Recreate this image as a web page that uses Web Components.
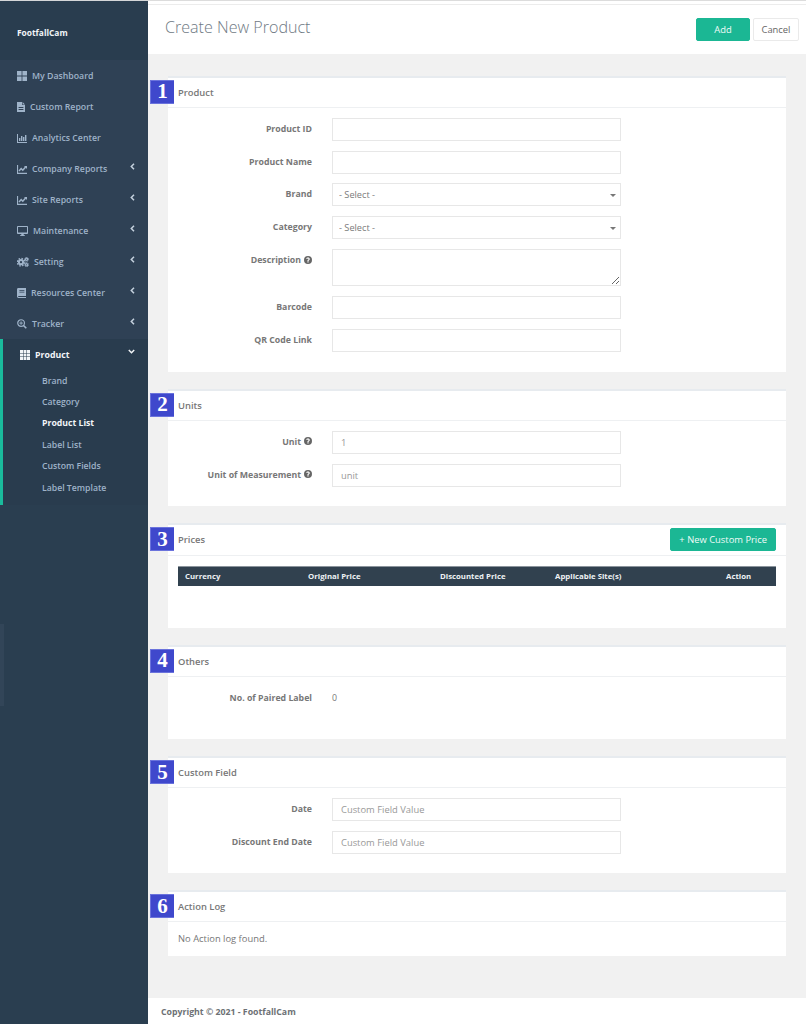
<!DOCTYPE html>
<html lang="en">
<head>
<meta charset="utf-8">
<title>Create New Product</title>
<style>
  html, body { margin: 0; background: #f1f1f1; }
  body { font-family: "Open Sans", "Liberation Sans", sans-serif; }
</style>
</head>
<body>
<fc-app>
  <fc-sidebar slot="side" brand="FootfallCam">
    <fc-nav-item icon="dashboard" w="10">My Dashboard</fc-nav-item>
    <fc-nav-item icon="file" w="8">Custom Report</fc-nav-item>
    <fc-nav-item icon="bars" w="10">Analytics Center</fc-nav-item>
    <fc-nav-item icon="line" w="10" more>Company Reports</fc-nav-item>
    <fc-nav-item icon="line" w="10" more>Site Reports</fc-nav-item>
    <fc-nav-item icon="desktop" w="11" more>Maintenance</fc-nav-item>
    <fc-nav-item icon="cogs" w="12" more>Setting</fc-nav-item>
    <fc-nav-item icon="book" w="9" more>Resources Center</fc-nav-item>
    <fc-nav-item icon="search" w="10" more>Tracker</fc-nav-item>
    <fc-nav-group label="Product">
      <fc-sub-item>Brand</fc-sub-item>
      <fc-sub-item>Category</fc-sub-item>
      <fc-sub-item current>Product List</fc-sub-item>
      <fc-sub-item>Label List</fc-sub-item>
      <fc-sub-item>Custom Fields</fc-sub-item>
      <fc-sub-item>Label Template</fc-sub-item>
    </fc-nav-group>
  </fc-sidebar>

  <fc-page-head heading="Create New Product"></fc-page-head>

  <fc-section num="1" heading="Product" pad-bottom="20">
    <fc-field label="Product ID"></fc-field>
    <fc-field label="Product Name"></fc-field>
    <fc-field label="Brand" kind="select" value="- Select -"></fc-field>
    <fc-field label="Category" kind="select" value="- Select -"></fc-field>
    <fc-field label="Description" kind="textarea" help></fc-field>
    <fc-field label="Barcode"></fc-field>
    <fc-field label="QR Code Link"></fc-field>
  </fc-section>

  <fc-section num="2" heading="Units" pad-bottom="19.5">
    <fc-field label="Unit" value="1" help></fc-field>
    <fc-field label="Unit of Measurement" value="unit" help></fc-field>
  </fc-section>

  <fc-section num="3" heading="Prices" pad-bottom="41.7">
    <fc-button slot="action" primary>+ New Custom Price</fc-button>
    <fc-price-table></fc-price-table>
  </fc-section>

  <fc-section num="4" heading="Others" pad-bottom="29">
    <fc-field label="No. of Paired Label" kind="static" value="0"></fc-field>
  </fc-section>

  <fc-section num="5" heading="Custom Field" pad-bottom="19">
    <fc-field label="Date" placeholder="Custom Field Value"></fc-field>
    <fc-field label="Discount End Date" placeholder="Custom Field Value"></fc-field>
  </fc-section>

  <fc-section num="6" heading="Action Log" pad-bottom="11">
    <fc-note>No Action log found.</fc-note>
  </fc-section>

  <fc-footer slot="foot">Copyright © 2021 - FootfallCam</fc-footer>
</fc-app>

<script>
  const ICONS = {
    dashboard: '<svg viewBox="0 0 10 10"><path d="M0 0h4.6v4.5H0zM5.4 0H10v4.5H5.4zM0 5.5h4.6V10H0zM5.4 5.5H10V10H5.4z"/></svg>',
    file: '<svg viewBox="0 0 8 10"><path fill-rule="evenodd" d="M0 0h5v3h3v7H0zM5.6 0 8 2.4H5.6zM1.6 5v.9h4.8V5zM1.6 7v.9h4.8V7z"/></svg>',
    bars: '<svg viewBox="0 0 10 10"><path d="M0 1h1v7.9h9V10H0zM2 5h1.4v3H2zM4 3h1.4v5H4zM6 4h1.4v4H6zM8 2h1.4v6H8z"/></svg>',
    line: '<svg viewBox="0 0 10 10"><path d="M0 1h1.1v7.8H10V10H0z"/><path d="M2 7 4.2 4.6 5.8 6.2 8.6 3" fill="none" stroke="currentColor" stroke-width="1.5"/><path d="M7 2H10V5z"/></svg>',
    desktop: '<svg viewBox="0 0 11 10"><path fill-rule="evenodd" d="M.8 0h9.4c.4 0 .8.4.8.8v6.4c0 .4-.4.8-.8.8H.8C.4 8 0 7.6 0 7.2V.8C0 .4.4 0 .8 0zM1 1v5.4h9V1zM4.4 8h2.2l.3 1.2H8V10H3v-.8h1.1z"/></svg>',
    cogs: '<svg viewBox="0 0 12 10"><circle cx="4" cy="5.2" r="2.1" fill="none" stroke="currentColor" stroke-width="2"/><circle cx="4" cy="5.2" r="3.7" fill="none" stroke="currentColor" stroke-width="1.4" stroke-dasharray="1.6 1.3"/><circle cx="9.6" cy="2.3" r="1.1" fill="none" stroke="currentColor" stroke-width="1.2"/><circle cx="9.6" cy="2.3" r="2" fill="none" stroke="currentColor" stroke-width=".9" stroke-dasharray="1 .6"/><circle cx="9.6" cy="7.7" r="1.1" fill="none" stroke="currentColor" stroke-width="1.2"/><circle cx="9.6" cy="7.7" r="2" fill="none" stroke="currentColor" stroke-width=".9" stroke-dasharray="1 .6"/></svg>',
    book: '<svg viewBox="0 0 9 10"><path fill-rule="evenodd" d="M1.4 0H9v8H1.6c-.7 0-.7 1 0 1H9v1H1.4C.6 10 0 9.4 0 8.6V1.4C0 .6.6 0 1.4 0zM2.4 2v.8h5V2zM2.4 3.8v.8h5v-.8z"/></svg>',
    search: '<svg viewBox="0 0 11 11"><circle cx="4.5" cy="4.5" r="3.7" fill="none" stroke="currentColor" stroke-width="1.3"/><path d="M7.2 7.2 10.2 10.2" stroke="currentColor" stroke-width="1.8"/><path d="M4.5 2.6v3.8M2.6 4.5h3.8" stroke="currentColor" stroke-width="1"/></svg>',
    grid: '<svg viewBox="0 0 10 10"><path d="M0 0h3v2.9H0zM3.5 0h3v2.9h-3zM7 0h3v2.9H7zM0 3.5h3v2.9H0zM3.5 3.5h3v2.9h-3zM7 3.5h3v2.9H7zM0 7h3v3H0zM3.5 7h3v3h-3zM7 7h3v3H7z"/></svg>',
    left: '<svg viewBox="0 0 5 7"><path d="M4 .8 1.3 3.5 4 6.2" fill="none" stroke="currentColor" stroke-width="1.5"/></svg>',
    down: '<svg viewBox="0 0 7 5"><path d="M.8 1 3.5 3.7 6.2 1" fill="none" stroke="currentColor" stroke-width="1.5"/></svg>',
    help: '<svg viewBox="0 0 8 8"><path fill-rule="evenodd" d="M4 0a4 4 0 1 1 0 8 4 4 0 0 1 0-8zM3.4 5.3v1.1h1.2V5.3zM4 1.5c-1 0-1.6.5-1.8 1.2l.9.4c.1-.4.4-.6.8-.6s.7.2.7.5c0 .3-.3.5-.6.7-.4.3-.6.5-.6 1v.2h1.2c0-.4.2-.5.5-.7.4-.3.7-.6.7-1.2 0-.9-.8-1.5-1.8-1.5z"/></svg>'
  };

  customElements.define('fc-app', class extends HTMLElement {
    constructor() {
      super();
      this.attachShadow({ mode: 'open' }).innerHTML = `
      <style>
        :host { display: grid; grid-template-columns: 148px 658px; width: 806px; height: 1024px; overflow: hidden; }
        main { display: flex; flex-direction: column; height: 1024px; background: #f1f1f1; }
        .content { flex: 1; display: flex; flex-direction: column; gap: 17px; padding: 0 20px; }
      </style>
      <slot name="side"></slot>
      <main>
        <div class="content"><slot></slot></div>
        <slot name="foot"></slot>
      </main>`;
    }
  });

  customElements.define('fc-sidebar', class extends HTMLElement {
    constructor() {
      super();
      this.attachShadow({ mode: 'open' }).innerHTML = `
      <style>
        :host { display: flex; flex-direction: column; position: relative; height: 1024px; background: #2a3e50; border-top: 1px solid #d4d6d8; box-sizing: border-box; }
        .brand { height: 59px; flex: none; display: flex; align-items: center; padding: 3px 0 0 17px; box-sizing: border-box;
          background: #293d4f; color: #f2f5f8; font: 700 8.4px "Open Sans", sans-serif; }
        nav { background: #2f4155; display: flex; flex-direction: column; }
        .ghost { position: absolute; left: 0; top: 623px; width: 4px; height: 82px; background: #324558; }
      </style>
      <div class="brand"></div>
      <nav><slot></slot></nav>
      <div class="ghost"></div>`;
      this.shadowRoot.querySelector('.brand').textContent = this.getAttribute('brand');
    }
  });

  customElements.define('fc-nav-item', class extends HTMLElement {
    constructor() {
      super();
      const w = this.getAttribute('w');
      this.attachShadow({ mode: 'open' }).innerHTML = `
      <style>
        :host { display: flex; align-items: center; height: 31px; padding-left: 17px; position: relative; color: #9fb3c9; font: 600 8.75px "Open Sans", sans-serif; }
        .ic { width: ${w}px; margin-right: 5px; flex: none; display: flex; fill: currentColor; }
        .ic svg { width: 100%; display: block; }
        .more { position: absolute; left: 130px; top: 10px; width: 5px; color: #c5d1de; fill: currentColor; }
        .more svg { display: block; width: 100%; }
      </style>
      <span class="ic">${ICONS[this.getAttribute('icon')]}</span>
      <slot></slot>
      ${this.hasAttribute('more') ? `<span class="more">${ICONS.left}</span>` : ''}`;
    }
  });

  customElements.define('fc-nav-group', class extends HTMLElement {
    constructor() {
      super();
      this.attachShadow({ mode: 'open' }).innerHTML = `
      <style>
        :host { display: block; background: #293c4e; border-left: 3px solid #1abb9c; height: 166px; box-sizing: border-box; }
        .head { display: flex; align-items: center; height: 31px; padding-left: 17px; position: relative; color: #f2f5f8; font: 700 8.75px "Open Sans", sans-serif; }
        .ic { width: 10px; margin-right: 5px; display: flex; fill: currentColor; }
        .ic svg { width: 100%; display: block; }
        .caret { position: absolute; left: 125px; top: 10px; width: 7px; color: #f2f5f8; }
        .caret svg { display: block; width: 100%; }
        .subs { display: flex; flex-direction: column; }
      </style>
      <div class="head"><span class="ic">${ICONS.grid}</span><span class="lbl"></span><span class="caret">${ICONS.down}</span></div>
      <div class="subs"><slot></slot></div>`;
      this.shadowRoot.querySelector('.lbl').textContent = this.getAttribute('label');
    }
  });

  customElements.define('fc-sub-item', class extends HTMLElement {
    constructor() {
      super();
      this.attachShadow({ mode: 'open' }).innerHTML = `
      <style>
        :host { display: flex; align-items: center; height: 21.4px; padding-left: 39px; color: #9fb3c9; font: 600 8.7px "Open Sans", sans-serif; }
        :host([current]) { color: #f2f5f8; font-weight: 700; }
      </style>
      <slot></slot>`;
    }
  });

  customElements.define('fc-page-head', class extends HTMLElement {
    constructor() {
      super();
      this.attachShadow({ mode: 'open' }).innerHTML = `
      <style>
        :host { display: flex; align-items: center; justify-content: space-between; position: relative; height: 49px; margin: 0 -20px 4.6px; padding: 4px 7px 0 17px;
          background: #fff; border-top: 1px solid #dcdcdc; }
        :host::before { content: ""; position: absolute; left: 0; right: 0; top: 3px; height: 1px; background: #ececec; }
        h1 { margin: 0; font: 300 16.1px "Open Sans", sans-serif; color: #6f7a84; position: relative; top: -2.5px; }
        .acts { display: flex; gap: 3px; }
      </style>
      <h1></h1>
      <div class="acts">
        <fc-button primary wide>Add</fc-button>
        <fc-button cancel>Cancel</fc-button>
      </div>`;
      this.shadowRoot.querySelector('h1').textContent = this.getAttribute('heading');
    }
  });

  customElements.define('fc-button', class extends HTMLElement {
    constructor() {
      super();
      this.attachShadow({ mode: 'open' }).innerHTML = `
      <style>
        :host { display: inline-flex; align-items: center; justify-content: center; height: 23px; padding: 0 8px; box-sizing: border-box; border-radius: 2px; font: 400 9.4px "Open Sans", sans-serif; background: #fff; color: #666; border: 1px solid #eaeaea; }
        :host([primary]) { background: #1bb794; color: #f0fbf8; border-color: #1bb794; }
        :host([wide]) { width: 54px; }
        :host([cancel]) { width: 46px; padding: 0; }
      </style>
      <slot></slot>`;
    }
  });

  customElements.define('fc-section', class extends HTMLElement {
    constructor() {
      super();
      const pad = this.getAttribute('pad-bottom') || 20;
      this.attachShadow({ mode: 'open' }).innerHTML = `
      <style>
        :host { display: block; position: relative; background: #fff; border-top: 2px solid #e7ebef; }
        .badge { position: absolute; left: -18px; top: 2px; width: 24px; height: 24px; box-sizing: border-box; display: flex; align-items: center; justify-content: center;
          background: #3f48cc; border: 1px solid #6b73dc; border-right: 0; color: #fff; font: 700 21px/1 "Liberation Serif", serif; }
        header { display: flex; align-items: center; justify-content: space-between; height: 29.3px; padding: 0 10px; border-bottom: 1px solid #eef0f2; }
        h2 { margin: 0; font: 600 9.4px "Open Sans", sans-serif; color: #777; }
        .body { padding: 10px 0 ${pad}px; display: flex; flex-direction: column; gap: 9.8px; }
      </style>
      <div class="badge"></div>
      <header><h2></h2><slot name="action"></slot></header>
      <div class="body"><slot></slot></div>`;
      this.shadowRoot.querySelector('.badge').textContent = this.getAttribute('num');
      this.shadowRoot.querySelector('h2').textContent = this.getAttribute('heading');
    }
  });

  customElements.define('fc-field', class extends HTMLElement {
    constructor() {
      super();
      const kind = this.getAttribute('kind') || 'text';
      const value = this.getAttribute('value') || '';
      let control = '<input type="text">';
      if (kind === 'select') control = `<div class="sel"><select><option></option></select></div>`;
      if (kind === 'textarea') control = '<textarea></textarea>';
      if (kind === 'static') control = '<span class="static"></span>';
      this.attachShadow({ mode: 'open' }).innerHTML = `
      <style>
        :host { display: grid; grid-template-columns: 144px 289px; column-gap: 20px; align-items: start; }
        label { font: 700 8.75px/23px "Open Sans", sans-serif; color: #777; display: flex; justify-content: flex-end; align-items: center; height: 23px; gap: 3px; }
        label svg { width: 8px; height: 8px; fill: #666; position: relative; top: -1px; }
        input, select, textarea { display: block; width: 100%; height: 23px; box-sizing: border-box; margin: 0; padding: 0 8px; background: #fff; border: 1px solid #e7e7e7; border-radius: 0;
          font: 400 9.4px "Open Sans", sans-serif; color: #999; outline: 0; appearance: none; }
        select { padding-left: 6px; color: #7a7a7a; font-size: 9.2px; }
        input::placeholder { color: #999; opacity: 1; }
        textarea { height: 37px; resize: vertical; }
        .sel { position: relative; }
        .sel::after { content: ""; position: absolute; right: 5px; top: 11px; border: 3px solid transparent; border-top: 3px solid #777; border-bottom: 0; }
        .static { font: 400 8.75px/23px "Open Sans", sans-serif; color: #777; }
      </style>
      <label><span class="t"></span>${this.hasAttribute('help') ? ICONS.help : ''}</label>
      ${control}`;
      const root = this.shadowRoot;
      root.querySelector('.t').textContent = this.getAttribute('label');
      if (kind === 'select') root.querySelector('option').textContent = value;
      if (kind === 'static') root.querySelector('.static').textContent = value;
      if (kind === 'text') {
        const input = root.querySelector('input');
        input.value = value;
        if (this.hasAttribute('placeholder')) input.placeholder = this.getAttribute('placeholder');
      }
    }
  });

  customElements.define('fc-price-table', class extends HTMLElement {
    constructor() {
      super();
      this.attachShadow({ mode: 'open' }).innerHTML = `
      <style>
        :host { display: grid; grid-template-columns: 123px 132px 115px 171px 57px; margin: 0 10px; height: 20.5px; box-sizing: border-box; align-items: center;
          background: #31414f; border-top: 1px solid #8b949c; color: #eef1f4; font: 700 7.8px "Open Sans", sans-serif; }
        span { padding-left: 7px; }
      </style>
      <span>Currency</span><span>Original Price</span><span>Discounted Price</span><span>Applicable Site(s)</span><span>Action</span>`;
    }
  });

  customElements.define('fc-note', class extends HTMLElement {
    constructor() {
      super();
      this.attachShadow({ mode: 'open' }).innerHTML = `
      <style>
        :host { display: block; padding-left: 10px; font: 400 9.4px/13px "Open Sans", sans-serif; color: #777; }
      </style>
      <slot></slot>`;
    }
  });

  customElements.define('fc-footer', class extends HTMLElement {
    constructor() {
      super();
      this.attachShadow({ mode: 'open' }).innerHTML = `
      <style>
        :host { display: flex; align-items: center; height: 25px; padding: 1px 0 0 13px; background: #fff; color: #6d7175; font: 700 8.75px "Open Sans", sans-serif; }
      </style>
      <slot></slot>`;
    }
  });
</script>
</body>
</html>
